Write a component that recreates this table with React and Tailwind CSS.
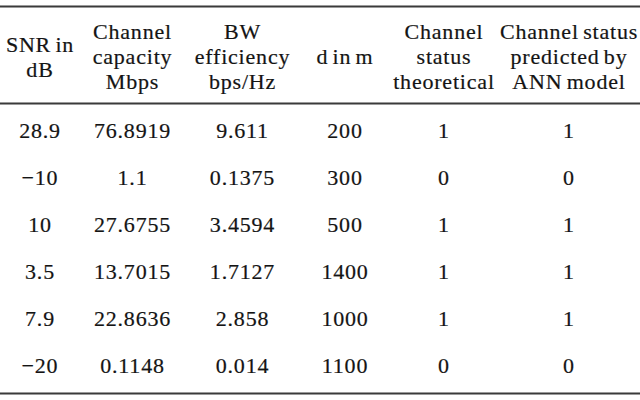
const cols = 'grid grid-cols-[80px_105px_115px_90px_108px_142px]'

const headers = [
    ['SNR in', 'dB'],
    ['Channel', 'capacity', 'Mbps'],
    ['BW', 'efficiency', 'bps/Hz'],
    ['d in m'],
    ['Channel', 'status', 'theoretical'],
    ['Channel status', 'predicted by', 'ANN model'],
]

const rows = [
    ['28.9', '76.8919', '9.611', '200', '1', '1'],
    ['\u221210', '1.1', '0.1375', '300', '0', '0'],
    ['10', '27.6755', '3.4594', '500', '1', '1'],
    ['3.5', '13.7015', '1.7127', '1400', '1', '1'],
    ['7.9', '22.8636', '2.858', '1000', '1', '1'],
    ['\u221220', '0.1148', '0.014', '1100', '0', '0'],
]

function Rule() {
    return <div className="h-[3px] border-y border-[#9a9a9a] bg-[#3a3a3a]" />
}

export default function App() {
    return (
        <div className="w-[640px] h-[400px] bg-white pt-[5px] text-[#141414] text-[22px] tracking-[0.8px] [word-spacing:-2px] [-webkit-text-stroke:0.2px_#141414]" style={{ fontFamily: '"Liberation Serif", serif' }}>
            <Rule />
            <div className={`${cols} h-[94px] items-center`}>
                {headers.map((h, i) => (
                    <div key={i} className="flex flex-col items-center leading-[25px] whitespace-nowrap pt-[3px]">
                        {h.map(l => <span key={l}>{l}</span>)}
                    </div>
                ))}
            </div>
            <Rule />
            <div className="pt-[2px] pb-[3px]">
                {rows.map((r, i) => (
                    <div key={i} className={`${cols} h-[47px] items-center`}>
                        {r.map((v, j) => (
                            <div key={j} className="text-center">{v}</div>
                        ))}
                    </div>
                ))}
            </div>
            <Rule />
        </div>
    )
}
